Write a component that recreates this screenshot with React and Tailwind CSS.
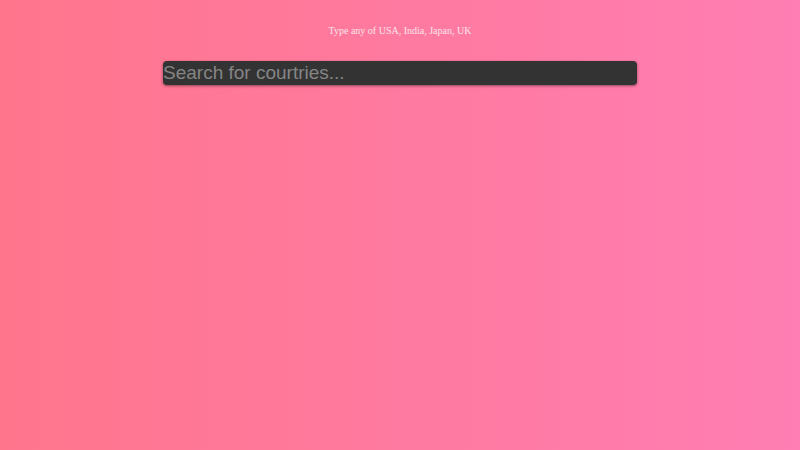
export default function App() {
    return (
        <div className="min-h-screen w-full bg-gradient-to-r from-[#ff758c] to-[#ff7eb3] flex flex-col items-center">
            {/* Hint */}
            <p className="mt-[25px] text-[10px] leading-[12px] text-[#fde4ea] font-['Liberation_Serif',serif]">
                Type any of USA, India, Japan, UK
            </p>

            {/* Search */}
            <input
                type="text"
                placeholder="Search for courtries..."
                className="mt-[24px] w-[474px] h-[24px] px-0 rounded-[4px] bg-[#333333] text-[19px] leading-[24px] text-white placeholder:text-[#858585] font-['Liberation_Sans',sans-serif] shadow-[0_1px_3px_rgba(0,0,0,0.45)] outline-none"
            />
        </div>
    );
}
